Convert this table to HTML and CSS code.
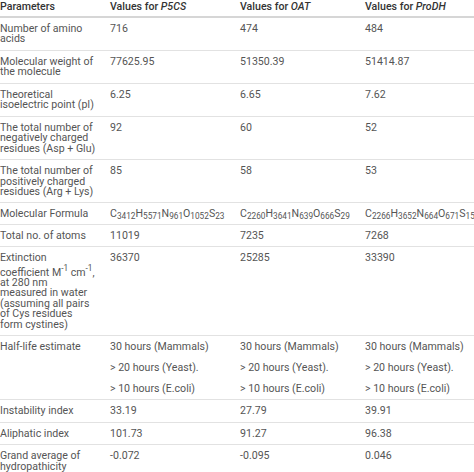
FILE: index.html
```html
<!DOCTYPE html>
<html>
<head>
<meta charset="utf-8">
<link rel="stylesheet" href="styles.css">
</head>
<body>
<table class="props">
  <colgroup>
    <col class="c1"><col class="c2"><col class="c3"><col class="c4">
  </colgroup>
  <thead>
    <tr>
      <th>Parameters</th>
      <th>Values for <i>P5CS</i></th>
      <th>Values for <i>OAT</i></th>
      <th>Values for <i>ProDH</i></th>
    </tr>
  </thead>
  <tbody>
    <tr><td>Number of amino acids</td><td>716</td><td>474</td><td>484</td></tr>
    <tr><td>Molecular weight of the molecule</td><td>77625.95</td><td>51350.39</td><td>51414.87</td></tr>
    <tr><td>Theoretical isoelectric point (pI)</td><td>6.25</td><td>6.65</td><td>7.62</td></tr>
    <tr><td>The total number of negatively charged residues (Asp + Glu)</td><td>92</td><td>60</td><td>52</td></tr>
    <tr><td>The total number of positively charged residues (Arg + Lys)</td><td>85</td><td>58</td><td>53</td></tr>
    <tr class="formula"><td>Molecular Formula</td>
      <td>C<sub>3412</sub>H<sub>5571</sub>N<sub>961</sub>O<sub>1052</sub>S<sub>23</sub></td>
      <td>C<sub>2260</sub>H<sub>3641</sub>N<sub>639</sub>O<sub>666</sub>S<sub>29</sub></td>
      <td>C<sub>2266</sub>H<sub>3652</sub>N<sub>664</sub>O<sub>671</sub>S<sub>15</sub></td></tr>
    <tr><td>Total no. of atoms</td><td>11019</td><td>7235</td><td>7268</td></tr>
    <tr class="ext"><td>Extinction coefficient M<sup>-1</sup> cm<sup>-1</sup>, at 280 nm measured in water (assuming all pairs of Cys residues form cystines)</td><td>36370</td><td>25285</td><td>33390</td></tr>
    <tr class="half"><td>Half-life estimate</td>
      <td><p>30 hours (Mammals)</p><p>&gt; 20 hours (Yeast).</p><p>&gt; 10 hours (E.coli)</p></td>
      <td><p>30 hours (Mammals)</p><p>&gt; 20 hours (Yeast).</p><p>&gt; 10 hours (E.coli)</p></td>
      <td><p>30 hours (Mammals)</p><p>&gt; 20 hours (Yeast).</p><p>&gt; 10 hours (E.coli)</p></td></tr>
    <tr><td>Instability index</td><td>33.19</td><td>27.79</td><td>39.91</td></tr>
    <tr><td>Aliphatic index</td><td>101.73</td><td>91.27</td><td>96.38</td></tr>
    <tr><td>Grand average of hydropathicity</td><td>-0.072</td><td>-0.095</td><td>0.046</td></tr>
  </tbody>
</table>
</body>
</html>
```

FILE: styles.css
```css
html, body {
  margin: 0;
  padding: 0;
  overflow: hidden;
  background: #ffffff;
}
body {
  font-family: Roboto, "Liberation Sans", Arial, sans-serif;
  font-size: 10.6px;
  line-height: 10.45px;
  color: #555555;
}
.props {
  border-collapse: collapse;
  table-layout: fixed;
  width: 520px;
}
.c1 { width: 110px; }
.c2 { width: 130px; }
.c3 { width: 125px; }
.c4 { width: 155px; }
.props th {
  text-align: left;
  font-weight: 500;
  color: #333333;
  padding: 1px 10px 4px 0;
  border-bottom: 2px solid #d6d6d6;
  vertical-align: top;
  white-space: nowrap;
  line-height: 11px;
}
.props td {
  padding: 6px 14px 5px 0;
  border-bottom: 1px solid #e2e2e2;
  vertical-align: top;
}
.props td + td { white-space: nowrap; }
.props sub, .props sup {
  font-size: 78%;
}
.props sub { vertical-align: -2px; line-height: 0; }
.props sup { vertical-align: super; line-height: 1; }
.formula td { padding-bottom: 4px; }
.half td p {
  margin: 0 0 10.5px 0;
}
.half td p:last-child { margin-bottom: 0; }
```
